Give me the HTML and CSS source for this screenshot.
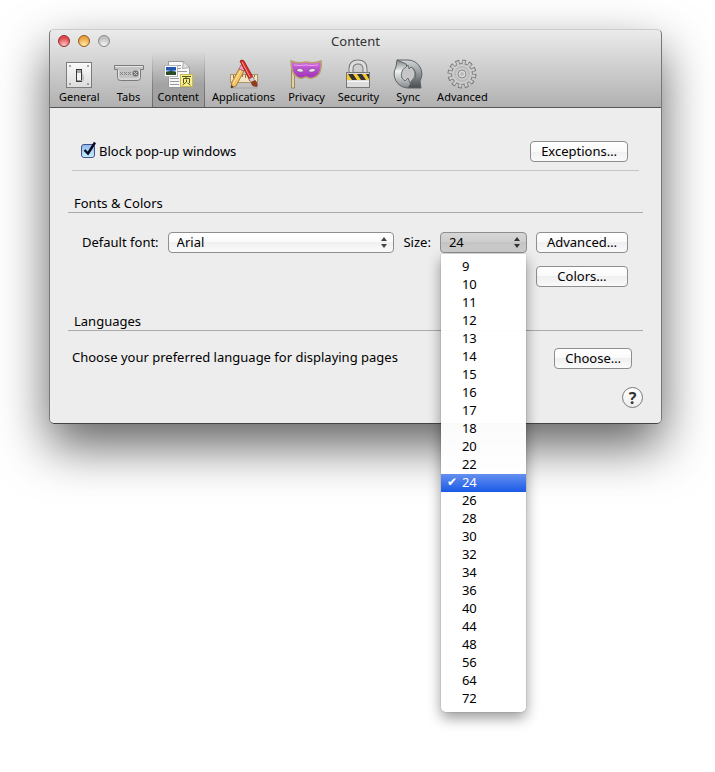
FILE: index.html
```html
<!DOCTYPE html>
<html lang="en">
<head>
  <meta charset="UTF-8">
  <meta name="viewport" content="width=device-width, initial-scale=1.0">
  <title>Content</title>
  <link rel="stylesheet" href="styles.css">
</head>
<body>
  <div class="window">
    <header class="titlebar">
      <div class="lights">
        <button class="light close" aria-label="Close"></button>
        <button class="light minimize" aria-label="Minimize"></button>
        <button class="light zoom" aria-label="Zoom"></button>
      </div>
      <h1>Content</h1>
    </header>

    <nav class="toolbar">
      <button class="tab">
        <svg width="32" height="32" viewBox="0 0 32 32">
          <defs>
            <linearGradient id="plate" x2="0" y2="1">
              <stop offset="0" stop-color="#fafafa"/>
              <stop offset="1" stop-color="#dcdcdc"/>
            </linearGradient>
          </defs>
          <rect x="3.500" y="4.500" width="25" height="25" fill="url(#plate)" stroke="#7c7c7c"/>
          <g fill="#8a8a8a"><circle cx="7" cy="8" r="1"/><circle cx="25" cy="8" r="1"/><circle cx="7" cy="26" r="1"/><circle cx="25" cy="26" r="1"/></g>
          <path d="M19 14l2 4v4l-2 2z" fill="#c4c4c4"/>
          <rect x="13.500" y="11.500" width="5" height="12" fill="#f4f4f4" stroke="#3a3a3a"/>
          <rect x="14" y="12" width="4" height="3" fill="#aaa"/>
          <path d="M14 22.500h5" stroke="#999"/>
        </svg>
        <span>General</span>
      </button>
      <button class="tab">
        <svg width="32" height="32" viewBox="0 0 32 32">
          <ellipse cx="16" cy="29" rx="10" ry="1" fill="#bbb"/>
          <path d="M1.500 7.500h29v4h-3v8q0 3-3 3h-17q-3 0-3-3v-8h-3z" fill="#c4c4c4" stroke="#7a7a7a"/>
          <path d="M2 8.500h28M5.500 12v7q0 2 2 2h17q2 0 2-2v-7" stroke="#e6e6e6" fill="none"/>
          <path d="M7 14l3 3m0-3l-3 3M11 14l3 3m0-3l-3 3M15 14l3 3m0-3l-3 3" stroke="#858585"/>
          <circle cx="22.500" cy="15.500" r="3" fill="#707070"/>
          <path d="M21 14l3 3m0-3l-3 3" stroke="#ccc"/>
        </svg>
        <span>Tabs</span>
      </button>
      <button class="tab selected">
        <svg width="32" height="32" viewBox="0 0 32 32">
          <path d="M6.500 3.500h15l6 6v20h-21z" fill="#f8f8f8" stroke="#999"/>
          <path d="M21.500 3.500l-1 7 7-1z" fill="#e0e0e0" stroke="#aaa"/>
          <path d="M16 7.500h3M16 10.500h3M16 13.500h9M8 20.500h9M8 23.500h9M8 26.500h9" stroke="#999"/>
          <rect x="2.500" y="7.500" width="13" height="11" fill="#fff" stroke="#b5b5b5"/>
          <path d="M4 9h10v8H4z" fill="#2458b0"/>
          <path d="M4 12q3 0 5 1l5-1v2H4z" fill="#8fb8e4"/>
          <path d="M4 14q5-2 10 0v3H4z" fill="#2d4a24"/>
          <rect x="18.500" y="16.500" width="12" height="12" fill="#f8f08e" stroke="#c6ba55"/>
          <path d="M20 18.500h9M24.500 18.500l-1 2M21.500 25v-4.500h6V25M24.500 21.500v2.500l-4 3M25.500 25l3 2" fill="none" stroke="#554f1c"/>
        </svg>
        <span>Content</span>
      </button>
      <button class="tab">
        <svg width="32" height="32" viewBox="0 0 32 32">
          <path d="M4 30h26" stroke="#a5a5a5"/>
          <rect x="2.500" y="16.500" width="27" height="8" fill="#f3e4c3" stroke="#a99468"/>
          <path d="M5.500 17v3M8.500 17v2M11.500 17v3M14.500 17v2M17.500 17v3M20.500 17v2M23.500 17v3M26.500 17v2" stroke="#8b7444"/>
          <path d="M11 11l5 2-8 15-5 2 1-6z" fill="#f5c562" stroke="#93692a" stroke-width=".800"/>
          <path d="M13 12L5 26" stroke="#ffe6a4"/>
          <path d="M11 11l2-4q3-2 5 1l-2 5z" fill="#f3a4b8" stroke="#96606c" stroke-width=".800"/>
          <path d="M3 30l.500-3 2 2z" fill="#222"/>
          <path d="M12 3q2-2 4 0l10 18-4 2z" fill="#dd2d29" stroke="#8d1612" stroke-width=".800"/>
          <path d="M14 4l8 15" stroke="#ff9a90"/>
          <path d="M21 21l4-2 2 4-4 1z" fill="#d5d5d5" stroke="#777" stroke-width=".500"/>
          <path d="M23 24l4-2q4 3 2 7-6 0-6-5z" fill="#8f3d20"/>
        </svg>
        <span>Applications</span>
      </button>
      <button class="tab">
        <svg width="32" height="32" viewBox="0 0 32 32">
          <defs>
            <linearGradient id="mask" x2="0" y2="1">
              <stop offset="0" stop-color="#d76ee6"/>
              <stop offset="1" stop-color="#9d2fb6"/>
            </linearGradient>
          </defs>
          <path d="M1.500 8v22h3V18z" fill="#e0d3a6" stroke="#8b7a4b" stroke-width=".800"/>
          <path d="M1 3q7 3 15 1 8 2 15-1 1 8-2 13-5 5-10 4-3-2-6 0-5 1-9-4-3-5-3-13z" fill="url(#mask)" stroke="#b7a26c" stroke-width="1.500"/>
          <path d="M4 7q6 1 12 0 6 1 12 0" stroke="#e6a5f0" fill="none"/>
          <path d="M6 12q5-4 8 1-4 3-8-1zM18 13q4-5 8-1-4 4-8 1z" fill="#e4e0e4" stroke="#8b459b" stroke-width=".800"/>
        </svg>
        <span>Privacy</span>
      </button>
      <button class="tab">
        <svg width="32" height="32" viewBox="0 0 32 32">
          <path d="M9 15v-4q0-7 7-7t7 7v4" fill="none" stroke="#777" stroke-width="5"/>
          <path d="M9 15v-4q0-7 7-7t7 7v4" fill="none" stroke="#dedede" stroke-width="3"/>
          <rect x="4.500" y="14.500" width="23" height="15" fill="#dcdcdc" stroke="#777"/>
          <path d="M5 23h22v1H5z" fill="#f8f8f8"/>
          <path d="M5 16h22v6H5z" fill="#333"/>
          <path d="M5 16h1l4 6H5zM11 16h4l4 6h-4zM20 16h4l3 5v1h-3z" fill="#f6ca31"/>
        </svg>
        <span>Security</span>
      </button>
      <button class="tab">
        <svg width="32" height="32" viewBox="0 0 32 32">
          <defs>
            <linearGradient id="sync-left" x2="0" y2="1">
              <stop offset="0" stop-color="#7d8385"/>
              <stop offset=".400" stop-color="#f0f2f2"/>
              <stop offset="1" stop-color="#85898b"/>
            </linearGradient>
            <linearGradient id="sync-right" x2="0" y2="1">
              <stop offset="0" stop-color="#d3d6d7"/>
              <stop offset=".500" stop-color="#8f9496"/>
              <stop offset="1" stop-color="#454b4e"/>
            </linearGradient>
          </defs>
          <path d="M5 2h11a14 14 0 0 1 12 21l1 7H16l4-7a8 8 0 0 0-1-14l-2 4-4-6z" fill="url(#sync-right)" stroke="#5c6264"/>
          <path d="M5 2l9 4 1 3a8 8 0 0 0-2 14l2-4 4 6-3 5A14 14 0 0 1 4 9z" fill="url(#sync-left)" stroke="#5c6264"/>
          <path d="M14 9l2-2 1 4 2-2a8 8 0 0 1 1 13l-2 3-2-5-3 3a8 8 0 0 1 1-14z" fill="#c6c6c6" stroke="#5c6264" stroke-width=".800"/>
        </svg>
        <span>Sync</span>
      </button>
      <button class="tab">
        <svg width="32" height="32" viewBox="0 0 32 32">
          <circle cx="16" cy="16" r="12" fill="none" stroke="#777" stroke-width="5" pathLength="120" stroke-dasharray="6 4"/>
          <circle cx="16" cy="16" r="10.500" fill="#cdcdcd" stroke="#777"/>
          <circle cx="16" cy="16" r="11.500" fill="none" stroke="#cdcdcd" stroke-width="4" pathLength="120" stroke-dasharray="4 6" stroke-dashoffset="-1"/>
          <circle cx="16" cy="16" r="7" fill="none" stroke="#bbb" stroke-width="2"/>
          <circle cx="16" cy="16" r="4" fill="#dadada" stroke="#888"/>
          <circle cx="16" cy="16" r="2" fill="#bbb"/>
        </svg>
        <span>Advanced</span>
      </button>
    </nav>

    <main class="pane">
      <div class="popups">
        <input type="checkbox" id="block-popups" checked>
        <label for="block-popups">Block pop-up windows</label>
        <button class="btn">Exceptions…</button>
      </div>

      <h2>Fonts &amp; Colors</h2>
      <div class="fonts">
        <label for="default-font">Default font:</label>
        <select id="default-font" class="font">
          <option>Arial</option>
        </select>
        <label for="font-size">Size:</label>
        <div class="size">
          <select id="font-size" class="open">
            <option>24</option>
          </select>
          <ul class="menu" role="listbox" aria-label="Size">
            <li role="option">9</li>
            <li role="option">10</li>
            <li role="option">11</li>
            <li role="option">12</li>
            <li role="option">13</li>
            <li role="option">14</li>
            <li role="option">15</li>
            <li role="option">16</li>
            <li role="option">17</li>
            <li role="option">18</li>
            <li role="option">20</li>
            <li role="option">22</li>
            <li role="option" class="current" aria-selected="true">24</li>
            <li role="option">26</li>
            <li role="option">28</li>
            <li role="option">30</li>
            <li role="option">32</li>
            <li role="option">34</li>
            <li role="option">36</li>
            <li role="option">40</li>
            <li role="option">44</li>
            <li role="option">48</li>
            <li role="option">56</li>
            <li role="option">64</li>
            <li role="option">72</li>
          </ul>
        </div>
        <div class="font-buttons">
          <button class="btn">Advanced…</button>
          <button class="btn">Colors…</button>
        </div>
      </div>

      <h2>Languages</h2>
      <div class="languages">
        <p>Choose your preferred language for displaying pages</p>
        <button class="btn">Choose…</button>
      </div>

      <div class="footer">
        <button class="help" aria-label="Help">?</button>
      </div>
    </main>
  </div>
</body>
</html>
```
FILE: styles.css
```css
* {
  box-sizing: border-box;
}
body {
  min-height: 100vh;
  margin: 0;
  padding: 29px 53px 60px 49px;
  background-color: #fff;
  color: #000;
  font-family: "Noto Sans", "Open Sans", sans-serif;
  font-size: 13px;
  line-height: 18px;
}
button, select {
  font: inherit;
  color: inherit;
}
h1, h2, p, ul {
  margin: 0;
  padding: 0;
  font-size: 13px;
  font-weight: normal;
}
h1 {
  color: #333;
}
.window {
  border: 1px solid #777;
  border-top-color: #ccc;
  border-bottom-color: #444;
  border-radius: 5px;
  background: linear-gradient(#ebebeb, #b0b0b0 78px, #ededed 78px);
  box-shadow: 0 22px 50px rgba(0, 0, 0, 0.62);
}
.titlebar {
  display: grid;
  grid-template-columns: 1fr auto 1fr;
  align-items: center;
  height: 22px;
  padding: 0 8px;
}
.lights {
  display: flex;
  gap: 8px;
}
.light {
  width: 12px;
  height: 12px;
  padding: 0;
  border: 1px solid #777;
  border-radius: 50%;
}
.close {
  border-color: #8f2e2e;
  background: radial-gradient(circle at 50% 90%, #ffc4c4, #e0484c 70%);
}
.minimize {
  border-color: #96591c;
  background: radial-gradient(circle at 50% 90%, #fff3a8, #eb9f43 70%);
}
.zoom {
  border-color: #888;
  background: radial-gradient(circle at 50% 90%, #f4f4f4, #c0c0c0 70%);
}
.toolbar {
  display: flex;
  gap: 1px;
  height: 56px;
  padding: 0 3px;
  border-bottom: 1px solid #555;
}
.tab {
  display: flex;
  flex-direction: column;
  align-items: center;
  padding: 6px 6px 0;
  border: none;
  background: none;
  font-size: 11px;
  line-height: 14px;
}
.tab.selected {
  background:
    linear-gradient(rgba(0, 0, 0, 0), rgba(0, 0, 0, 0.35)) left / 1px 100% no-repeat,
    linear-gradient(rgba(0, 0, 0, 0), rgba(0, 0, 0, 0.35)) right / 1px 100% no-repeat,
    linear-gradient(rgba(0, 0, 0, 0), rgba(0, 0, 0, 0.16) 60%, rgba(0, 0, 0, 0.1));
}
.pane {
  padding: 33px 18px 15px;
}
.popups {
  display: flex;
  align-items: flex-start;
  gap: 2px;
  margin: 0 4px 23px;
  padding: 0 11px 8px 9px;
  border-bottom: 1px solid #c4c4c4;
}
.popups .btn {
  margin-left: auto;
}
.popups label {
  line-height: 20px;
}
.popups input {
  appearance: none;
  width: 16px;
  height: 18px;
  margin: 0;
  background: linear-gradient(#fff, #a9cdf2) 1px 4px / 12px 12px no-repeat;
}
.popups input:checked {
  background: url("data:image/svg+xml,%3Csvg xmlns='http://www.w3.org/2000/svg' width='16' height='18'%3E%3Cdefs%3E%3ClinearGradient id='g' x2='0' y2='1'%3E%3Cstop offset='0' stop-color='%2390b8e8'/%3E%3Cstop offset='1' stop-color='%23c8f0ff'/%3E%3C/linearGradient%3E%3C/defs%3E%3Crect x='.5' y='3.5' width='13' height='13' rx='2.5' fill='url(%23g)' stroke='%23434f86'/%3E%3Cpath d='M3.500 9l3.500 3.500L14 1.500' fill='none' stroke='%23050a20' stroke-width='2.400'/%3E%3C/svg%3E") no-repeat;
}
h2 {
  padding-left: 6px;
  border-bottom: 1px solid #aaa;
}
.fonts {
  display: flex;
  align-items: flex-start;
  gap: 9px;
  padding: 19px 15px 25px 14px;
  line-height: 20px;
}
.btn, select {
  height: 21px;
  border: 1px solid #8e8e8e;
  border-radius: 4px;
  background: linear-gradient(#fff, #fafafa 50%, #f0f0f0 50%, #fafafa);
  line-height: 18px;
}
.btn {
  padding: 0 10px 2px;
}
select {
  appearance: none;
  width: 100%;
  padding: 0 8px 1px;
  background:
    url("data:image/svg+xml,%3Csvg xmlns='http://www.w3.org/2000/svg' width='6' height='11'%3E%3Cpath d='M0 4l3-4 3 4zM0 7h6l-3 4z' fill='%23444'/%3E%3C/svg%3E") right 6px center no-repeat,
    linear-gradient(#fff, #fafafa 50%, #f0f0f0 50%, #fafafa);
}
.font {
  flex: 1;
}
.size {
  position: relative;
  width: 87px;
}
.open {
  background:
    url("data:image/svg+xml,%3Csvg xmlns='http://www.w3.org/2000/svg' width='6' height='11'%3E%3Cpath d='M0 4l3-4 3 4zM0 7h6l-3 4z' fill='%23333'/%3E%3C/svg%3E") right 6px center no-repeat,
    linear-gradient(#d6d6d6, #cdcdcd 50%, #c4c4c4 50%, #d0d0d0);
}
.menu {
  position: absolute;
  top: 22px;
  left: 1px;
  right: 1px;
  padding: 4px 0;
  border-radius: 0 0 5px 5px;
  background-color: rgba(255, 255, 255, 0.97);
  box-shadow: 0 6px 14px rgba(0, 0, 0, 0.4), 0 0 1px rgba(0, 0, 0, 0.6);
  line-height: 16px;
  list-style: none;
}
.menu li {
  height: 18px;
  padding-left: 21px;
}
.menu .current {
  display: flex;
  padding-left: 6px;
  background: linear-gradient(#648ff0, #1a5ae6);
  color: #fff;
}
.menu .current::before {
  content: "✔";
  width: 15px;
  font-family: "DejaVu Sans", sans-serif;
  font-size: 12px;
}
.font-buttons {
  display: flex;
  flex-direction: column;
  gap: 13px;
}
.languages {
  display: flex;
  justify-content: space-between;
  padding: 17px 11px 18px 4px;
}
.footer {
  display: flex;
  justify-content: flex-end;
}
.help {
  width: 21px;
  height: 21px;
  padding: 0;
  border: 1px solid #777;
  border-radius: 50%;
  background: linear-gradient(#fff, #eee);
  color: #333;
  font-size: 16px;
  font-weight: bold;
}
```
